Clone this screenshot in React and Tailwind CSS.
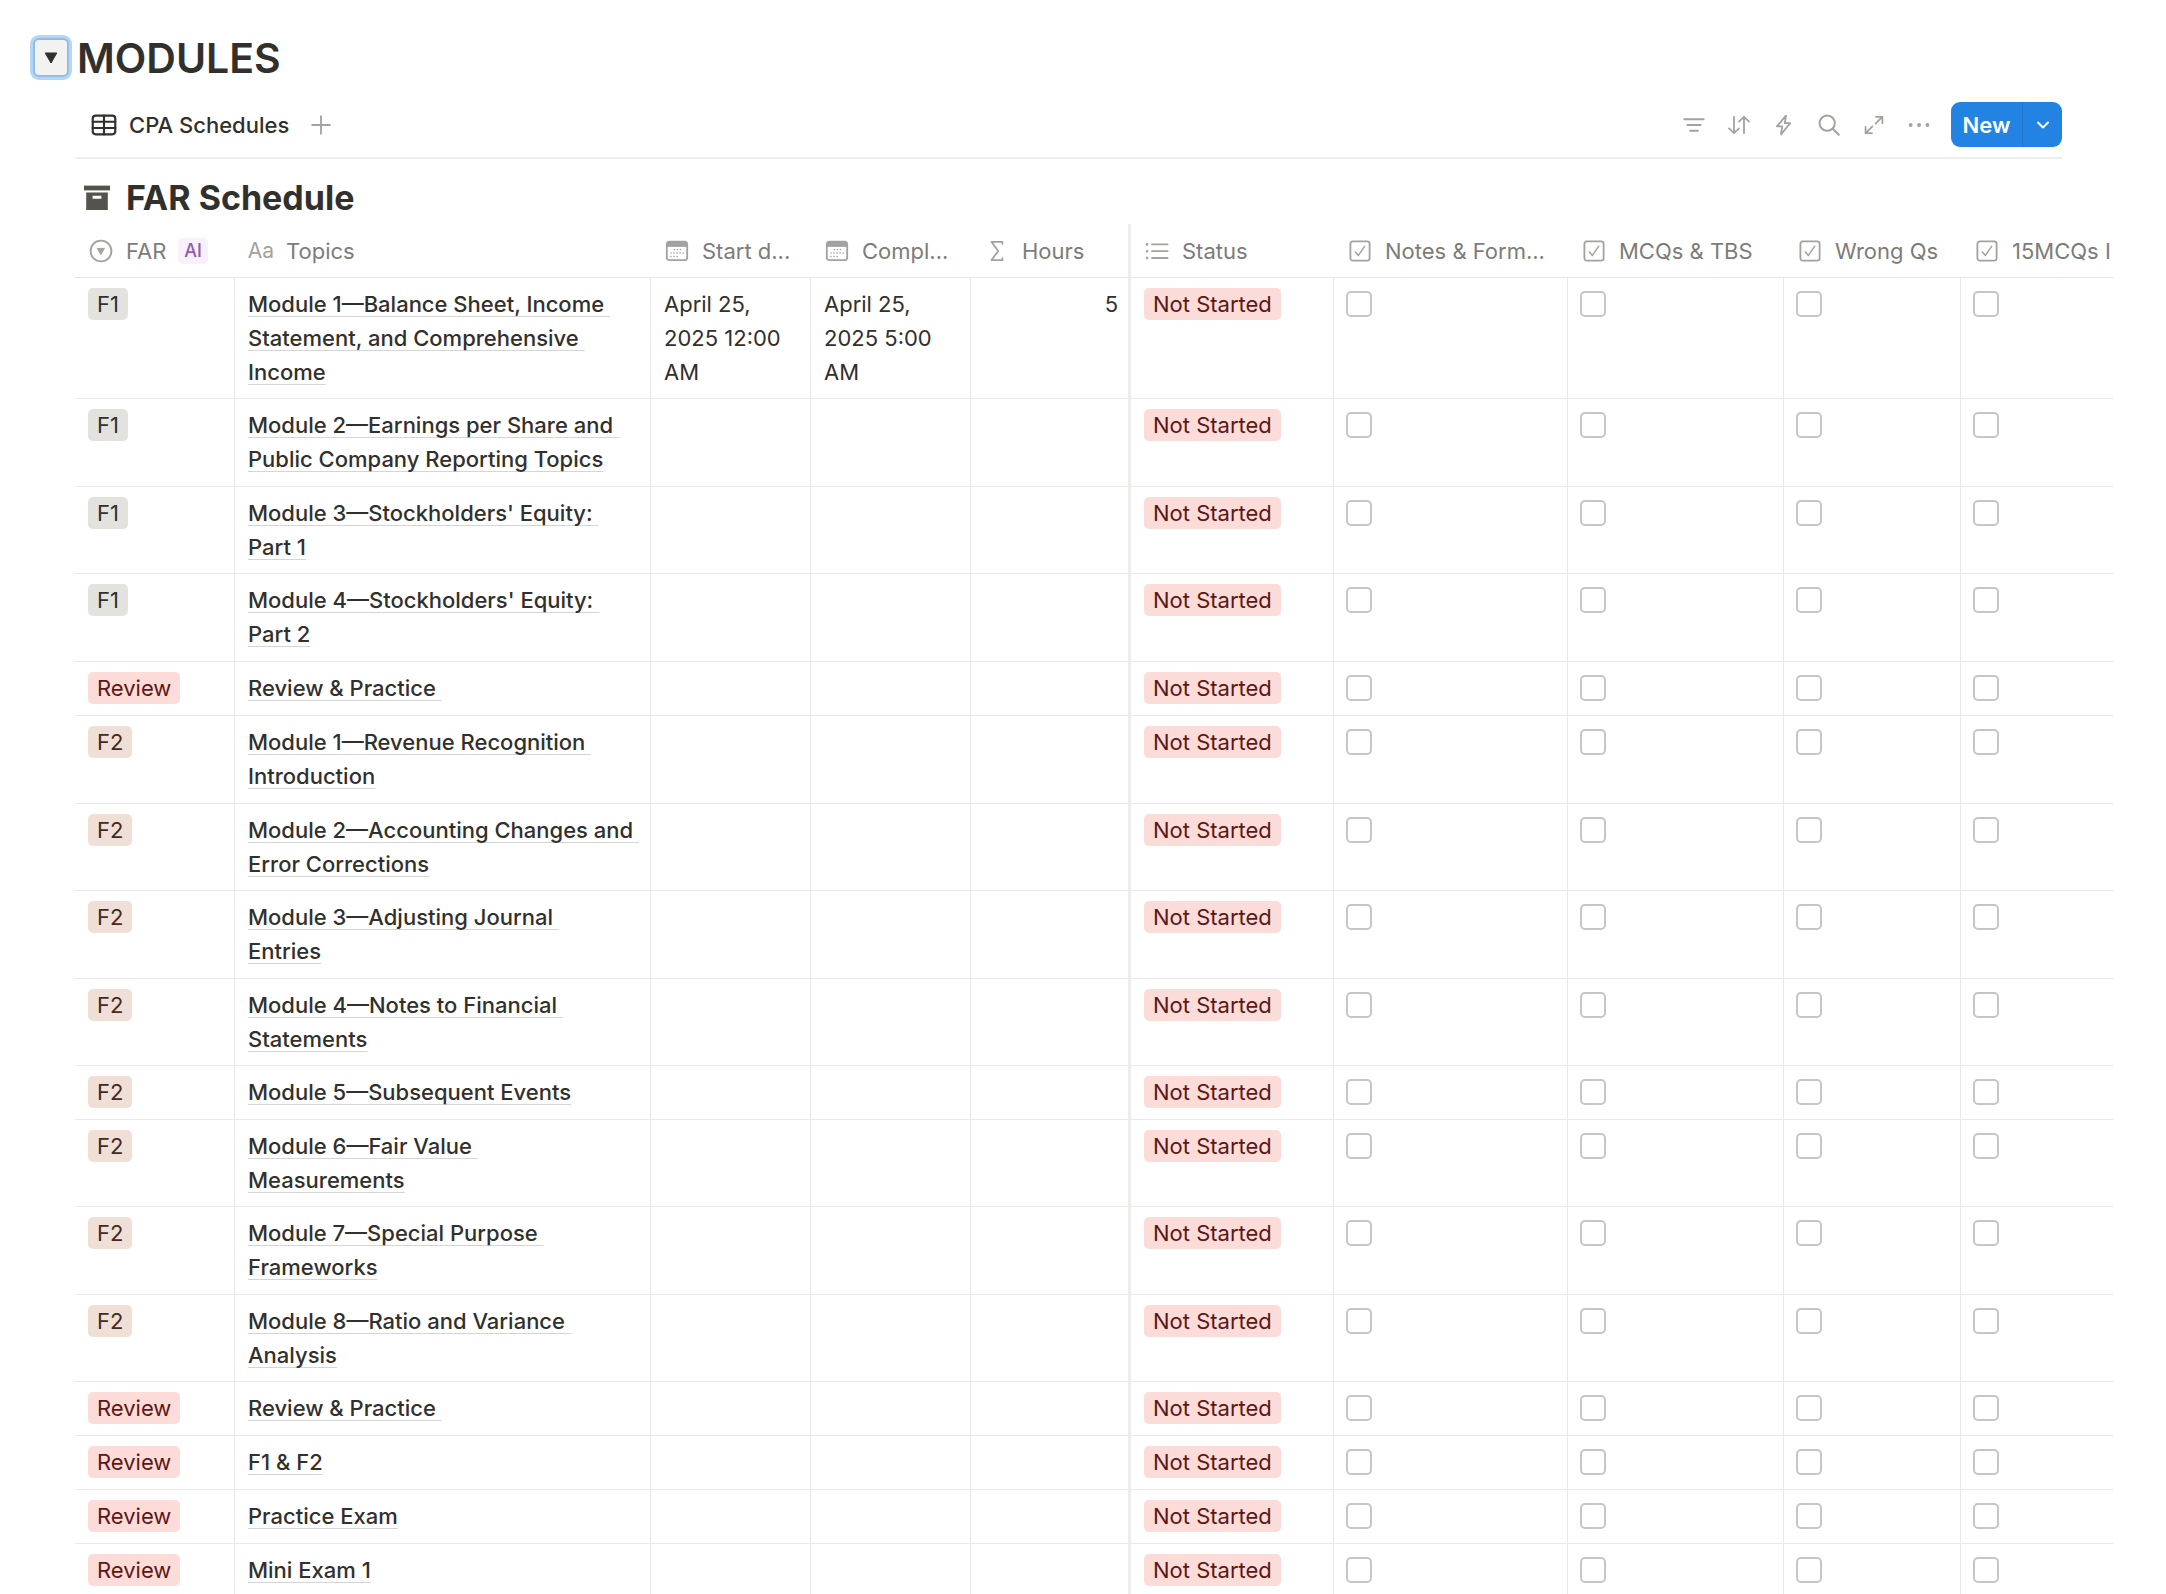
import { ChevronDown } from 'lucide-react';

const columns = [
  { label: 'Start d...', icon: CalendarIcon },
  { label: 'Compl...', icon: CalendarIcon },
  { label: 'Hours', icon: SigmaIcon, divider: true },
  { label: 'Status', icon: ListIcon },
  { label: 'Notes & Form...', icon: CheckIcon },
  { label: 'MCQs & TBS', icon: CheckIcon },
  { label: 'Wrong Qs', icon: CheckIcon },
  { label: '15MCQs I', icon: CheckIcon, last: true },
];

const checks = ['Notes & Formulas', 'MCQs & TBS', 'Wrong Qs', '15MCQs'];

const rows = [
  {
    tag: 'F1',
    topic: 'Module 1—Balance Sheet, Income \nStatement, and Comprehensive \nIncome',
    start: 'April 25,\n2025 12:00\nAM',
    end: 'April 25,\n2025 5:00\nAM',
    hours: 5,
  },
  { tag: 'F1', topic: 'Module 2—Earnings per Share and \nPublic Company Reporting Topics' },
  { tag: 'F1', topic: "Module 3—Stockholders' Equity: \nPart 1" },
  { tag: 'F1', topic: "Module 4—Stockholders' Equity: \nPart 2" },
  { tag: 'Review', topic: 'Review & Practice ' },
  { tag: 'F2', topic: 'Module 1—Revenue Recognition \nIntroduction' },
  { tag: 'F2', topic: 'Module 2—Accounting Changes and \nError Corrections' },
  { tag: 'F2', topic: 'Module 3—Adjusting Journal \nEntries' },
  { tag: 'F2', topic: 'Module 4—Notes to Financial \nStatements' },
  { tag: 'F2', topic: 'Module 5—Subsequent Events' },
  { tag: 'F2', topic: 'Module 6—Fair Value \nMeasurements' },
  { tag: 'F2', topic: 'Module 7—Special Purpose \nFrameworks' },
  { tag: 'F2', topic: 'Module 8—Ratio and Variance \nAnalysis' },
  { tag: 'Review', topic: 'Review & Practice ' },
  { tag: 'Review', topic: 'F1 & F2' },
  { tag: 'Review', topic: 'Practice Exam' },
  { tag: 'Review', topic: 'Mini Exam 1' },
];

const tagColors = {
  F1: 'bg-[#e3e2de] text-[#32302c]',
  F2: 'bg-[#efdfd7] text-[#442a1e]',
  Review: 'bg-[#fbdcd9] text-[#5d1715]',
  'Not Started': 'bg-[#fbdcd9] text-[#5d1715]',
};

function Icon({ className = 'size-6', children }) {
  return (
    <svg
      viewBox="0 0 24 24"
      className={className}
      fill="none"
      stroke="currentColor"
      strokeWidth="2"
      strokeLinecap="round"
      strokeLinejoin="round"
      aria-hidden="true"
    >
      {children}
    </svg>
  );
}

function SelectIcon() {
  return (
    <Icon>
      <circle cx="12" cy="12" r="10.4" strokeWidth="1.9" />
      <path d="M8.6 9.4h6.8L12 15.2z" fill="currentColor" strokeWidth="1" />
    </Icon>
  );
}

function CalendarIcon() {
  return (
    <Icon>
      <rect x="1.8" y="2.6" width="20.4" height="18.6" rx="2.8" strokeWidth="1.8" />
      <path d="M2 7V5.2a2.6 2.6 0 0 1 2.6-2.6h14.8A2.6 2.6 0 0 1 22 5.2V7z" fill="currentColor" strokeWidth="1" />
      <path d="M9.4 10.6h9M6 14h12.4M6 17.4h9" strokeWidth="1.5" strokeDasharray="0.1 2.9" />
    </Icon>
  );
}

function SigmaIcon() {
  return (
    <Icon>
      <path d="M17.4 4.8V2.8H6.4L13.2 12l-6.8 9.2h11v-2" strokeWidth="1.8" />
    </Icon>
  );
}

function ListIcon() {
  return (
    <Icon>
      <path d="M7 5.4h15.6M7 12.2h15.6M7 19h15.6" strokeWidth="1.8" />
      <path d="M2 5.4h.1M2 12.2h.1M2 19h.1" strokeWidth="2.6" />
    </Icon>
  );
}

function CheckIcon() {
  return (
    <Icon>
      <rect x="2.4" y="2.4" width="19.2" height="19.2" rx="2.4" strokeWidth="1.8" />
      <path d="M7.4 13l3 3.4 6.2-9" strokeWidth="1.5" />
    </Icon>
  );
}

function TextIcon() {
  return <span className="text-[21px] text-[#a3a29f]">Aa</span>;
}

const tools = [
  { name: 'Filter', art: <path d="M2.4 6.2h19.2M5.4 12h13.2M8.2 17.8h7.6" /> },
  { name: 'Sort', art: <path d="M7 3.8v16.4M2 15.4l5 4.8 5-4.8M17 20.2V3.8M12 8.6l5-4.8 5 4.8" strokeWidth="1.8" /> },
  { name: 'Automations', art: <path d="M14 2.6L5 13.4h5.2l-1.2 8 9.2-11.2h-5.4z" strokeWidth="1.8" /> },
  {
    name: 'Search',
    art: (
      <>
        <circle cx="10.2" cy="10.2" r="7.6" />
        <path d="M15.8 15.8l6 6" />
      </>
    ),
  },
  {
    name: 'Expand',
    art: <path d="M14 3.8h6.4v6.4M20 4.2l-6.4 6.4M3.6 13.8v6.4H10M4 19.8l6.4-6.4" strokeWidth="1.8" />,
  },
  { name: 'More', art: <path d="M3.6 12h.1M12 12h.1M20.4 12h.1" strokeWidth="3.8" /> },
];

function Tag({ name }) {
  return (
    <span className={`inline-flex h-8 items-center rounded-[5px] px-[9px] ${tagColors[name]}`}>{name}</span>
  );
}

function HeaderCell({ label, icon: IconComponent, divider, last, children }) {
  return (
    <th
      scope="col"
      className={`h-[54px] overflow-hidden border-b border-[#e6e6e4] p-0 pl-[13px] text-left font-normal ${
        divider ? 'border-r-3 border-r-[#ededec]' : ''
      } ${last ? '' : 'pr-1'}`}
    >
      <div className="flex items-center gap-3 whitespace-nowrap text-[#7d7c79]">
        <span className="flex w-[26px] shrink-0 justify-center text-[#a3a29f]">
          <IconComponent />
        </span>
        {label}
        {children}
      </div>
    </th>
  );
}

function Cell({ className = 'px-[13px]', divider, last, children }) {
  const edge = divider ? 'border-r-3 border-r-[#ededec]' : last ? '' : 'border-r border-r-[#e9e9e7]';
  return (
    <td className={`border-b border-b-[#e9e9e7] py-[9px] align-top whitespace-pre-wrap ${edge} ${className}`}>
      {children}
    </td>
  );
}

function Row({ row }) {
  const lines = row.topic.split('\n').length;
  return (
    <tr className={lines === 1 ? 'h-[54px]' : lines === 2 ? 'h-[87px] even:h-[88px]' : 'h-[121px]'}>
      <Cell>
        <div className="flex h-[34px] items-center">
          <Tag name={row.tag} />
        </div>
      </Cell>
      <Cell>
        <a
          href="#"
          className="font-medium underline decoration-[#d6d5d3] decoration-1 underline-offset-4 [text-decoration-skip-ink:none]"
        >
          {row.topic}
        </a>
      </Cell>
      <Cell>{row.start}</Cell>
      <Cell>{row.end}</Cell>
      <Cell divider className="px-[10px] text-right">
        {row.hours}
      </Cell>
      <Cell>
        <div className="flex h-[34px] items-center">
          <Tag name="Not Started" />
        </div>
      </Cell>
      {checks.map((check, i) => (
        <Cell key={check} last={i === checks.length - 1} className="px-3">
          <div className="flex h-[34px] items-center">
            <input
              type="checkbox"
              aria-label={`${check}: ${row.topic}`}
              className="size-[26px] appearance-none rounded-[5px] border-2 border-[#c7c6c4] bg-white checked:bg-[#2383e2]"
            />
          </div>
        </Cell>
      ))}
    </tr>
  );
}

export default function App() {
  return (
    <main className="h-screen overflow-hidden bg-white pt-8 pl-[33px] font-['Inter',sans-serif] text-[22px] leading-[34px] text-[#32302c]">
      {/* Toggle heading */}
      <div className="flex h-[51px] items-center gap-2">
        <button
          aria-label="Collapse section"
          className="flex h-[39px] w-9 items-center justify-center rounded-[6px] border-2 border-[#8fbdea] bg-[#f2f2f1] ring-3 ring-[#b5d5f4]"
        >
          <svg viewBox="0 0 14 12" className="h-3 w-[14px]" aria-hidden="true">
            <path d="M1.2 1h11.6L7 11z" fill="#32302c" stroke="#32302c" strokeLinejoin="round" />
          </svg>
        </button>
        <h1 className="text-[41px] font-semibold">MODULES</h1>
      </div>

      <div className="ml-[42px]">
        {/* View tabs and toolbar */}
        <div className="mt-[19px] mr-[104px] flex items-center justify-between border-b-2 border-[#ededec] pb-[10px]">
          <div className="flex items-center">
            <button className="flex items-center gap-3 pl-4 font-medium">
              <Icon className="size-[26px]">
                <rect x="1.6" y="3.4" width="20.8" height="17.2" rx="2.8" />
                <path d="M1.6 9h20.8M1.6 14.8h20.8M12 3.4v17.2" />
              </Icon>
              CPA Schedules
            </button>
            <button aria-label="Add view" className="flex w-16 justify-center text-[#a3a29f]">
              <Icon className="size-[22px]">
                <path d="M12 2.4v19.2M2.4 12h19.2" />
              </Icon>
            </button>
          </div>
          <div className="flex items-center">
            {tools.map((tool) => (
              <button
                key={tool.name}
                aria-label={tool.name}
                className="flex size-[45px] items-center justify-center text-[#a3a29f]"
              >
                <Icon>{tool.art}</Icon>
              </button>
            ))}
            <div className="ml-[10px] flex h-[45px] overflow-hidden rounded-[9px] bg-[#2383e2] text-white">
              <button className="w-[72px] border-r border-[#1f76cb] font-semibold">New</button>
              <button aria-label="New options" className="flex w-[39px] items-center justify-center">
                <ChevronDown size={20} strokeWidth={2.4} />
              </button>
            </div>
          </div>
        </div>

        {/* Database title */}
        <div className="mt-[13px] flex h-[52px] items-center gap-4 pl-[9px]">
          <svg viewBox="0 0 26 26" className="size-[26px]" fill="#55534e" aria-hidden="true">
            <path d="M0 .6h26v4.8H0z" />
            <path fillRule="evenodd" d="M2.2 7.6h21.6V25H2.2zM8.6 10.8v3h8.8v-3z" />
          </svg>
          <h2 className="text-[34px] font-bold">FAR Schedule</h2>
        </div>

        {/* Schedule table */}
        <div className="mr-[53px] overflow-hidden">
          <table className="w-full table-fixed border-separate border-spacing-0">
            <colgroup>
              <col className="w-[160px]" />
              <col className="w-[416px]" />
              <col className="w-[160px]" />
              <col className="w-[160px]" />
              <col className="w-[160px]" />
              <col className="w-[203px]" />
              <col className="w-[234px]" />
              <col className="w-[216px]" />
              <col className="w-[177px]" />
              <col />
            </colgroup>
            <thead>
              <tr>
                <HeaderCell label="FAR" icon={SelectIcon}>
                  <span className="flex h-[26px] items-center rounded-[5px] bg-[#f8f0fc] px-[6px] text-[18px] font-medium text-[#8f5bb5]">
                    AI
                  </span>
                </HeaderCell>
                <HeaderCell label="Topics" icon={TextIcon} />
                {columns.map((column) => (
                  <HeaderCell key={column.label} {...column} />
                ))}
              </tr>
            </thead>
            <tbody>
              {rows.map((row, i) => (
                <Row key={i} row={row} />
              ))}
            </tbody>
          </table>
        </div>
      </div>
    </main>
  );
}
